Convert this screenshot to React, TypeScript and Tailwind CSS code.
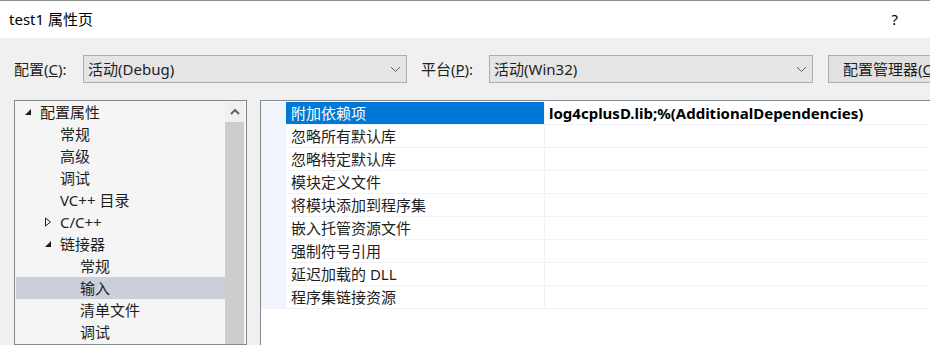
import React from 'react';

const font = { fontFamily: '"Noto Sans", "Noto Sans CJK SC", sans-serif' };

const treeItems: { label: string; indent: number; toggle?: 'open' | 'closed'; selected?: boolean }[] = [
  { label: '配置属性', indent: 0, toggle: 'open' },
  { label: '常规', indent: 1 },
  { label: '高级', indent: 1 },
  { label: '调试', indent: 1 },
  { label: 'VC++ 目录', indent: 1 },
  { label: 'C/C++', indent: 1, toggle: 'closed' },
  { label: '链接器', indent: 1, toggle: 'open' },
  { label: '常规', indent: 2 },
  { label: '输入', indent: 2, selected: true },
  { label: '清单文件', indent: 2 },
  { label: '调试', indent: 2 },
];

const props = [
  { name: '附加依赖项', value: 'log4cplusD.lib;%(AdditionalDependencies)' },
  { name: '忽略所有默认库', value: '' },
  { name: '忽略特定默认库', value: '' },
  { name: '模块定义文件', value: '' },
  { name: '将模块添加到程序集', value: '' },
  { name: '嵌入托管资源文件', value: '' },
  { name: '强制符号引用', value: '' },
  { name: '延迟加载的 DLL', value: '' },
  { name: '程序集链接资源', value: '' },
];

const Chevron = () => (
  <svg width="11" height="7" viewBox="0 0 11 7" className="shrink-0">
    <path d="M1 1 L5.5 5.5 L10 1" fill="none" stroke="#606060" strokeWidth="1" />
  </svg>
);

const Toggle = ({ kind }: { kind: 'open' | 'closed' }) =>
  kind === 'open' ? (
    <svg width="8" height="8" viewBox="0 0 8 8">
      <path d="M7 1 L7 7 L1 7 Z" fill="#1e1e1e" />
    </svg>
  ) : (
    <svg width="8" height="10" viewBox="0 0 8 10">
      <path d="M1.5 1 L6.5 5 L1.5 9 Z" fill="none" stroke="#1e1e1e" strokeWidth="1" />
    </svg>
  );

const Combo = ({ text }: { text: string }) => (
  <div className="w-[324px] h-[28px] shrink-0 border border-[#adadad] bg-[#e5e5e5] flex items-center justify-between pl-[4px] pr-[5px]">
    <span className="text-[15px] text-[#1e1e1e] leading-none">{text}</span>
    <Chevron />
  </div>
);

export default function App() {
  return (
    <div className="w-[930px] h-[345px] overflow-hidden bg-[#f0f0f0] flex flex-col" style={font}>
      <div className="h-px bg-[#8c8c8c] shrink-0" />
      <div className="h-[37px] bg-white flex items-center justify-between pl-[9px] pr-[32px] shrink-0">
        <span className="text-[15px] text-black">test1 属性页</span>
        <span className="text-[15px] text-black">?</span>
      </div>

      <div className="flex items-center pl-[14px] mt-[17px] shrink-0">
        <span className="w-[69px] shrink-0 text-[15px] text-[#1e1e1e]">
          配置(<span className="underline">C</span>):
        </span>
        <Combo text="活动(Debug)" />
        <span className="w-[68px] shrink-0 ml-[14px] text-[15px] text-[#1e1e1e]">
          平台(<span className="underline">P</span>):
        </span>
        <Combo text="活动(Win32)" />
        <div className="ml-[15px] h-[28px] w-[130px] shrink-0 border border-[#adadad] bg-[#e1e1e1] flex items-center pl-[14px] text-[15px] text-[#1e1e1e] whitespace-nowrap">
          配置管理器(<span className="underline">O</span>)...
        </div>
      </div>

      <div className="flex mt-[17px] flex-1 min-h-0">
        <div className="ml-[14px] w-[233px] border border-[#828790] bg-[#f5f5f5] flex shrink-0">
          <div className="flex-1 flex flex-col pl-[1px]">
            {treeItems.map((it, i) => (
              <div
                key={i}
                className={`h-[22px] flex items-center shrink-0 ${it.selected ? 'bg-[#cccedb]' : ''}`}
                style={{ paddingLeft: 8 + it.indent * 20 }}
              >
                <span className="w-[16px] flex items-center">
                  {it.toggle && <Toggle kind={it.toggle} />}
                </span>
                <span className="text-[15px] text-[#1e1e1e] whitespace-nowrap leading-none">{it.label}</span>
              </div>
            ))}
          </div>
          <div className="w-[19px] mr-[2px] flex flex-col">
            <div className="h-[21px] flex items-center justify-center bg-[#f0f0f0]">
              <svg width="10" height="6" viewBox="0 0 10 6">
                <path d="M1 5 L5 1 L9 5" fill="none" stroke="#606060" strokeWidth="2" />
              </svg>
            </div>
            <div className="flex-1 bg-[#cdcdcd]" />
          </div>
        </div>

        <div className="ml-[13px] flex-1 border-l border-t border-[#828790] bg-white pt-[1px]">
          <div className="flex flex-col">
            {props.map((p, i) => (
              <div key={i} className="flex h-[23px]">
                <div className="w-[25px] bg-[#f0f4fb] shrink-0" />
                <div
                  className={`w-[258px] shrink-0 flex items-center pl-[5px] border-b border-[#f0f2f7] ${
                    i === 0 ? 'bg-[#0078d7] text-white' : 'text-[#1e1e1e]'
                  }`}
                >
                  <span className="text-[15px] leading-none whitespace-nowrap">{p.name}</span>
                </div>
                <div className="flex-1 flex items-center pl-[4px] border-l border-b border-[#f0f2f7]">
                  <span className="text-[15px] font-bold text-black leading-none whitespace-nowrap">{p.value}</span>
                </div>
              </div>
            ))}
          </div>
        </div>
      </div>
    </div>
  );
}
